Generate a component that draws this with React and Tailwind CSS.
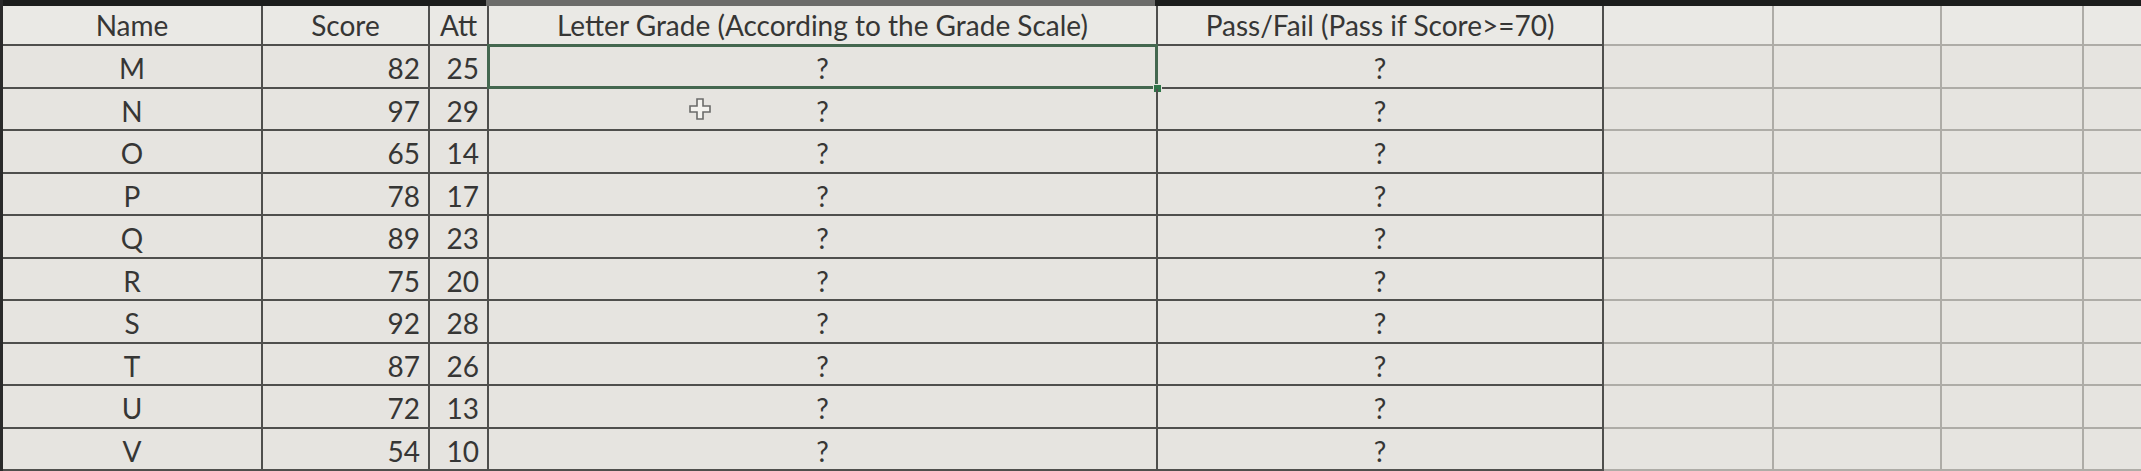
import React from "react";

const rows = [
  ["M", 82, 25],
  ["N", 97, 29],
  ["O", 65, 14],
  ["P", 78, 17],
  ["Q", 89, 23],
  ["R", 75, 20],
  ["S", 92, 28],
  ["T", 87, 26],
  ["U", 72, 13],
  ["V", 54, 10],
];

const cols = "grid grid-cols-[260px_167px_59px_669px_446px_170px_168px_142px_1fr]";
const dark = "border-r-2 border-b-2 border-[#4f4f4d]";
const light = "border-r-2 border-b-2 border-[#aeaca7]";

const Cursor = () => (
  <svg width="22" height="22" viewBox="0 0 22 22" className="absolute left-[200px] top-[9px]">
    <path
      d="M8 1h6v7h7v6h-7v7H8v-7H1V8h7z"
      fill="#f4f3ef"
      stroke="#6b6b69"
      strokeWidth="1.6"
      strokeLinejoin="miter"
    />
  </svg>
);

const Blanks = () => (
  <>
    <div className={light} />
    <div className={light} />
    <div className={light} />
    <div className="border-b-2 border-[#aeaca7]" />
  </>
);

export default function App() {
  return (
    <div
      className="w-[2141px] h-[471px] overflow-hidden bg-[#e6e4e0] text-[#363635] text-[28px] leading-none border-l-[3px] border-[#2a2a2a]"
      style={{ fontFamily: "Lato, 'Open Sans', sans-serif" }}
    >
      <div className="flex h-[6px]">
        <div className="w-[483px] bg-[#1c1d1c]" />
        <div className="w-[669px] bg-[#6c6c6a]" />
        <div className="flex-1 bg-[#1c1d1c]" />
      </div>

      <div className={`${cols} h-[40px] bg-[#eae9e5]`}>
        <div className={`${dark} flex items-center justify-center`}>Name</div>
        <div className={`${dark} flex items-center justify-center`}>Score</div>
        <div className={`${dark} flex items-center justify-center`}>Att</div>
        <div className={`${dark} flex items-center justify-center`}>Letter Grade (According to the Grade Scale)</div>
        <div className={`${dark} flex items-center justify-center`}>Pass/Fail (Pass if Score&gt;=70)</div>
        <Blanks />
      </div>

      {rows.map(([name, score, att], i) => (
        <div key={name} className={`${cols} h-[42.5px]`}>
          <div className={`${dark} flex items-center justify-center pt-1`}>{name}</div>
          <div className={`${dark} flex items-center justify-end pr-2 pt-1`}>{score}</div>
          <div className={`${dark} flex items-center justify-end pr-2 pt-1`}>{att}</div>
          <div className={`${dark} relative flex items-center justify-center pt-1`}>
            ?
            {i === 0 && (
              <>
                <div className="absolute -left-[2px] -top-[2px] -right-[2px] -bottom-[2px] border-[3px] border-[#44674f]" />
                <div className="absolute -right-[6px] -bottom-[6px] w-[9px] h-[9px] bg-[#2e7448] border border-[#e4e2dd]" />
              </>
            )}
            {i === 1 && <Cursor />}
          </div>
          <div className={`${dark} flex items-center justify-center pt-1`}>?</div>
          <Blanks />
        </div>
      ))}
    </div>
  );
}
